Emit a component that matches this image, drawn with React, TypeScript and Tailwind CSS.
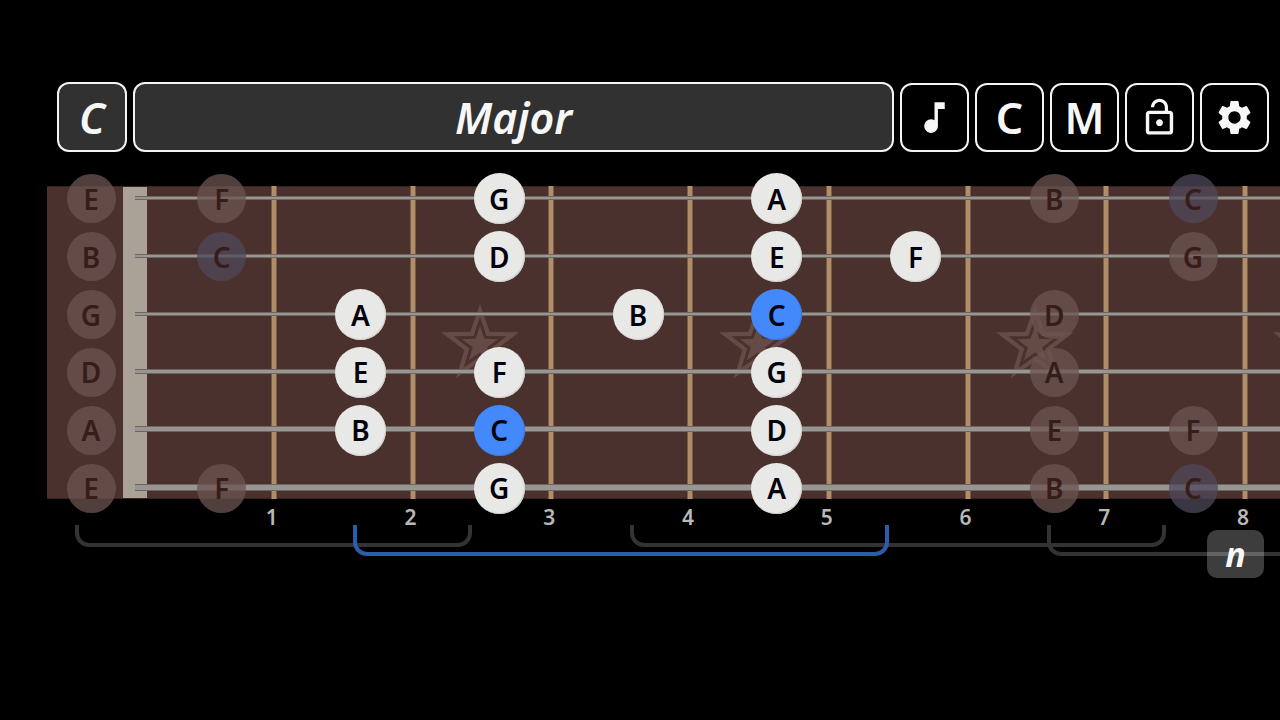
import type { ReactNode } from "react";
import { MdLockOpen, MdMusicNote, MdSettings } from "react-icons/md";

type NoteKind = "plain" | "root" | "faded" | "fadedRoot";

interface Note {
  name: string;
  kind: NoteKind;
}

const on = (name: string): Note => ({ name, kind: name === "C" ? "root" : "plain" });
const off = (name: string): Note => ({ name, kind: name === "C" ? "fadedRoot" : "faded" });

interface StringRow {
  open: Note;
  line: string;
  frets: (Note | null)[];
}

const strings: StringRow[] = [
  { open: off("E"), line: "h-[4px]", frets: [off("F"), null, on("G"), null, on("A"), null, off("B"), off("C")] },
  { open: off("B"), line: "h-[4px]", frets: [off("C"), null, on("D"), null, on("E"), on("F"), null, off("G")] },
  { open: off("G"), line: "h-[4px]", frets: [null, on("A"), null, on("B"), on("C"), null, off("D"), null] },
  { open: off("D"), line: "h-[5px]", frets: [null, on("E"), on("F"), null, on("G"), null, off("A"), null] },
  { open: off("A"), line: "h-[6px]", frets: [null, on("B"), on("C"), null, on("D"), null, off("E"), off("F")] },
  { open: off("E"), line: "h-[7px]", frets: [off("F"), null, on("G"), null, on("A"), null, off("B"), off("C")] },
];

const fretNumbers = [1, 2, 3, 4, 5, 6, 7, 8];
const inlayFrets = [3, 5, 7];

const noteStyles: Record<NoteKind, string> = {
  plain: "size-[51px] bg-[#e8e8e7] text-[#02020c] shadow-[inset_-1px_-1px_1px_#cfcfcd]",
  root: "size-[51px] bg-[#4489fb] text-[#02020c] shadow-[inset_-1px_-1px_1px_#3a78dd]",
  faded: "size-[49px] bg-[#6b5450]/75 text-[#371d1a]",
  fadedRoot: "size-[49px] bg-[#4f485b]/75 text-[#371d1a]",
};

function NoteDot({ note }: { note: Note }) {
  return (
    <span
      className={`flex shrink-0 items-center justify-center rounded-full text-[28px] leading-none font-semibold ${noteStyles[note.kind]}`}
    >
      {note.name}
    </span>
  );
}

function starPoints(r: number) {
  return Array.from({ length: 10 }, (_, i) => {
    const radius = i % 2 === 0 ? r : r * 0.4;
    const a = (Math.PI / 5) * i - Math.PI / 2;
    return `${(radius * Math.cos(a)).toFixed(2)},${(radius * Math.sin(a)).toFixed(2)}`;
  }).join(" L");
}

function Star() {
  return (
    <svg viewBox="-42 -42 84 84" className="size-[84px] shrink-0" fill="#654b46" fillRule="evenodd" aria-hidden="true">
      <path d={`M${starPoints(41)}Z M${starPoints(28)}Z M${starPoints(19)}Z`} />
    </svg>
  );
}

function ToolButton({ label, children }: { label: string; children: ReactNode }) {
  return (
    <button
      type="button"
      aria-label={label}
      className="flex size-[69px] shrink-0 items-center justify-center rounded-xl border-2 border-[#f4f4f4] text-[43px] leading-none font-semibold"
    >
      {children}
    </button>
  );
}

const bracket = "row-start-1 border-4 border-t-0";

export default function App() {
  return (
    <main className="min-h-screen overflow-hidden bg-black pt-[82px] font-['Noto_Sans',sans-serif] text-[#f7f7f7]">
      <header className="flex items-center gap-[6px] pr-[11px] pl-[57px]">
        <button
          type="button"
          className="flex size-[70px] shrink-0 items-center justify-center rounded-xl border-2 border-[#f4f4f4] bg-[#313131] text-[43px] leading-none font-semibold italic"
        >
          C
        </button>
        <button
          type="button"
          className="flex h-[70px] flex-1 items-center justify-center rounded-xl border-2 border-[#f4f4f4] bg-[#313131] text-[43px] leading-none font-semibold italic"
        >
          Major
        </button>
        <ToolButton label="Sound">
          <MdMusicNote className="size-[41px]" />
        </ToolButton>
        <ToolButton label="C">C</ToolButton>
        <ToolButton label="M">M</ToolButton>
        <ToolButton label="Lock position">
          <MdLockOpen className="size-[41px]" />
        </ToolButton>
        <ToolButton label="Settings">
          <MdSettings className="size-[41px]" />
        </ToolButton>
      </header>

      <section aria-label="Fretboard" className="mt-[17px] ml-[47px] grid h-[347px] grid-cols-1 grid-rows-1">
        {/* Wood and nut */}
        <div className="col-start-1 row-start-1 mt-[17px] mb-[17px] flex border-y border-[#38231f] bg-[#4b312d] pl-[76px]">
          <div className="w-[24px] bg-[#aaa296]" />
        </div>

        {/* Fret wires */}
        <div className="col-start-1 row-start-1 mt-[17px] mb-[17px] grid grid-cols-8 pr-[35px] pl-[88px]">
          {fretNumbers.map((n) => (
            <div key={n} className="-mr-[3px] flex justify-end">
              <div className="w-[6px] border-x border-[#7c5c44] bg-[#b08e69]" />
            </div>
          ))}
        </div>

        {/* Inlays */}
        <div className="col-start-1 row-start-1 mt-[5px] grid grid-cols-8 items-center overflow-hidden pr-[35px] pl-[88px]">
          {fretNumbers.map((n) => (
            <div key={n} className="flex justify-center pr-[3px]">
              {inlayFrets.includes(n) && <Star />}
            </div>
          ))}
          <div className="col-start-9 row-start-1 -mr-[35px] ml-[25px] w-[10px] overflow-hidden">
            <Star />
          </div>
        </div>

        {/* Strings */}
        <div className="col-start-1 row-start-1 grid grid-rows-6 items-center pl-[88px]">
          {strings.map((s, i) => (
            <div key={i} className={`border-y border-[#6c6660] bg-[#999592] ${s.line}`} />
          ))}
        </div>

        {/* Notes */}
        <div className="col-start-1 row-start-1 mt-px -mb-px grid grid-rows-6">
          {strings.map((s, i) => (
            <div key={i} className="flex items-center pr-[35px]">
              <div className="flex w-[88px] shrink-0 justify-center">
                <NoteDot note={s.open} />
              </div>
              <div className="grid flex-1 grid-cols-8 items-center">
                {s.frets.map((note, f) => (
                  <div key={f} className="flex justify-end pr-[26px]">
                    <div className="flex w-[52px] justify-center">{note && <NoteDot note={note} />}</div>
                  </div>
                ))}
              </div>
            </div>
          ))}
        </div>
      </section>

      <div className="-mt-[8px] mr-[35px] ml-[135px] grid grid-cols-8 text-[21px] leading-[18px] font-semibold text-[#b8b8b8]">
        {fretNumbers.map((n) => (
          <div key={n} className="-mr-[10px] flex justify-end">
            <span className="w-[24px] text-center">{n}</span>
          </div>
        ))}
      </div>

      <div className="relative -mt-px">
        <div className="mr-[35px] ml-[135px] grid grid-cols-8 items-start">
          <div className={`${bracket} col-start-1 col-end-4 mr-[79px] -ml-[60px] h-[22px] rounded-b-[14px] border-[#333]`} />
          <div className={`${bracket} col-start-4 col-end-9 mx-[79px] h-[22px] rounded-b-[14px] border-[#333]`} />
          <div className={`${bracket} col-start-7 col-end-9 -mr-[35px] ml-[79px] h-[31px] rounded-bl-[14px] border-r-0 border-[#333]`} />
          <div className={`${bracket} col-start-2 col-end-7 mx-[79px] h-[31px] rounded-b-[14px] border-[#2d5daa]`} />
        </div>
        <button
          type="button"
          className="absolute top-[5px] right-[16px] flex h-[48px] w-[57px] items-center justify-center rounded-[10px] bg-[#ffffff]/24 text-[34px] leading-none font-bold italic"
        >
          n
        </button>
      </div>
    </main>
  );
}
